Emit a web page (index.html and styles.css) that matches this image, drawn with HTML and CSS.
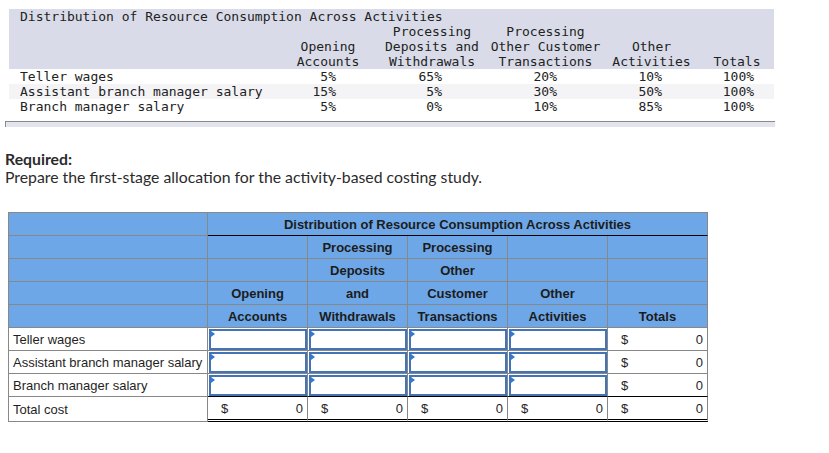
FILE: index.html
```html
<!DOCTYPE html>
<html lang="en">
<head>
<meta charset="utf-8">
<title>Activity-based costing</title>
<link rel="stylesheet" href="styles.css">
</head>
<body>
<div class="page">
  <div class="exhibit">
    <table class="dist">
      <colgroup>
        <col class="w-label"><col class="w-c1"><col class="w-c2"><col class="w-c3"><col class="w-c4"><col class="w-c5">
      </colgroup>
      <thead>
        <tr>
          <th class="dist-title" colspan="6">Distribution of Resource Consumption Across Activities</th>
        </tr>
        <tr>
          <th></th>
          <th>Opening<br>Accounts</th>
          <th>Processing<br>Deposits and<br>Withdrawals</th>
          <th>Processing<br>Other Customer<br>Transactions</th>
          <th>Other<br>Activities</th>
          <th>Totals</th>
        </tr>
      </thead>
      <tbody>
        <tr>
          <td class="dist-label">Teller wages</td>
          <td class="n1">5%</td><td class="n2">65%</td><td class="n3">20%</td><td class="n4">10%</td><td class="n5">100%</td>
        </tr>
        <tr class="alt">
          <td class="dist-label">Assistant branch manager salary</td>
          <td class="n1">15%</td><td class="n2">5%</td><td class="n3">30%</td><td class="n4">50%</td><td class="n5">100%</td>
        </tr>
        <tr>
          <td class="dist-label">Branch manager salary</td>
          <td class="n1">5%</td><td class="n2">0%</td><td class="n3">10%</td><td class="n4">85%</td><td class="n5">100%</td>
        </tr>
      </tbody>
    </table>
    <div class="scrollbar"></div>
  </div>

  <div class="required">
    <p class="required-head">Required:</p>
    <p class="required-text">Prepare the first-stage allocation for the activity-based costing study.</p>
  </div>

  <table class="answer">
    <colgroup>
      <col class="a-label"><col class="a-col"><col class="a-col"><col class="a-col"><col class="a-col"><col class="a-col">
    </colgroup>
    <thead>
      <tr>
        <th class="hl"></th>
        <th class="answer-title" colspan="5">Distribution of Resource Consumption Across Activities</th>
      </tr>
      <tr>
        <th class="hl"></th><th></th><th>Processing</th><th>Processing</th><th></th><th></th>
      </tr>
      <tr>
        <th class="hl"></th><th></th><th>Deposits</th><th>Other</th><th></th><th></th>
      </tr>
      <tr>
        <th class="hl"></th><th>Opening</th><th>and</th><th>Customer</th><th>Other</th><th></th>
      </tr>
      <tr>
        <th class="hl"></th><th>Accounts</th><th>Withdrawals</th><th>Transactions</th><th>Activities</th><th>Totals</th>
      </tr>
    </thead>
    <tbody>
      <tr>
        <td class="row-label">Teller wages</td>
        <td class="in-cell"><div class="entry"></div></td>
        <td class="in-cell"><div class="entry"></div></td>
        <td class="in-cell"><div class="entry"></div></td>
        <td class="in-cell"><div class="entry"></div></td>
        <td class="money"><div class="amt"><span>$</span><span>0</span></div></td>
      </tr>
      <tr>
        <td class="row-label">Assistant branch manager salary</td>
        <td class="in-cell"><div class="entry"></div></td>
        <td class="in-cell"><div class="entry"></div></td>
        <td class="in-cell"><div class="entry"></div></td>
        <td class="in-cell"><div class="entry"></div></td>
        <td class="money"><div class="amt"><span>$</span><span>0</span></div></td>
      </tr>
      <tr class="before-total">
        <td class="row-label">Branch manager salary</td>
        <td class="in-cell"><div class="entry"></div></td>
        <td class="in-cell"><div class="entry"></div></td>
        <td class="in-cell"><div class="entry"></div></td>
        <td class="in-cell"><div class="entry"></div></td>
        <td class="money"><div class="amt"><span>$</span><span>0</span></div></td>
      </tr>
      <tr class="total-row">
        <td class="row-label">Total cost</td>
        <td class="money"><div class="amt"><span>$</span><span>0</span></div></td>
        <td class="money"><div class="amt"><span>$</span><span>0</span></div></td>
        <td class="money"><div class="amt"><span>$</span><span>0</span></div></td>
        <td class="money"><div class="amt"><span>$</span><span>0</span></div></td>
        <td class="money"><div class="amt"><span>$</span><span>0</span></div></td>
      </tr>
    </tbody>
  </table>
</div>
</body>
</html>
```
FILE: styles.css
```css
html, body {
  margin: 0;
  padding: 0;
  background: #ffffff;
}

.page {
  padding: 9px 0 0 5px;
}

/* ---------- top exhibit (monospace) ---------- */
.exhibit {
  width: 770px;
}

.dist {
  border-collapse: collapse;
  table-layout: fixed;
  width: 765px;
  margin-left: 4px;
  font-family: "DejaVu Sans Mono", "Liberation Mono", monospace;
  font-size: 13px;
  line-height: 15px;
  color: #222222;
}

.w-label { width: 271px; }
.w-c1 { width: 96px; }
.w-c2 { width: 112px; }
.w-c3 { width: 115px; }
.w-c4 { width: 97px; }
.w-c5 { width: 74px; }

.dist thead {
  background: #d9dce8;
}

.dist th {
  font-weight: normal;
  padding: 0;
  text-align: center;
  vertical-align: bottom;
  white-space: nowrap;
}

.dist th.dist-title {
  text-align: left;
  padding-left: 11px;
}

.dist td {
  padding: 0;
  height: 15px;
  text-align: right;
  white-space: nowrap;
}

.dist tr.alt td {
  background: #f4f4f7;
}

.dist td.dist-label {
  text-align: left;
  padding-left: 11px;
}

.dist td.n1 { padding-right: 40px; }
.dist td.n2 { padding-right: 46px; }
.dist td.n3 { padding-right: 46px; }
.dist td.n4 { padding-right: 38px; }
.dist td.n5 { padding-right: 20px; }

.scrollbar {
  margin-top: 7px;
  height: 5px;
  border-top: 1px solid #8a8a8a;
  border-left: 1px solid #8a8a8a;
  background: #e3e5ee;
}

/* ---------- required ---------- */
.required {
  margin-top: 23px;
  font-family: "Lato", "Open Sans", sans-serif;
  font-size: 15.8px;
  line-height: 18px;
  color: #2b2b2b;
}

.required p {
  margin: 0;
}

.required-head {
  font-weight: bold;
}

/* ---------- answer table ---------- */
.answer {
  margin-top: 26px;
  margin-left: 3px;
  border-collapse: separate;
  border-spacing: 0;
  table-layout: fixed;
  width: 700px;
  border-top: 1px solid #888888;
  border-left: 1px solid #888888;
  font-family: "Liberation Sans", Arial, sans-serif;
  font-size: 13px;
  color: #1f1f1f;
}

.a-label { width: 199px; }
.a-col { width: 100px; }

.answer th,
.answer td {
  padding: 0;
  height: 22px;
  border-right: 1px solid #888888;
  border-bottom: 1px solid #888888;
  white-space: nowrap;
}

.answer th {
  background: #6ea7e7;
  font-weight: bold;
  text-align: center;
  vertical-align: middle;
  color: #1c1c1c;
}

.answer th.answer-title {
  border-bottom: 1px solid #000000;
}

.answer td.row-label {
  text-align: left;
  padding-left: 4px;
  background: #ffffff;
}

.answer td.in-cell {
  position: relative;
  padding: 1px 0 0 1px;
  height: 21px;
}

.entry {
  position: relative;
  height: 21px;
  box-sizing: border-box;
  border: 2px solid #4474b6;
  background: #ffffff;
}

.entry::before {
  content: "";
  position: absolute;
  left: 0;
  top: 0;
  border-top: 3px solid transparent;
  border-bottom: 3px solid transparent;
  border-left: 4px solid #2f7ad6;
}

.amt {
  display: flex;
  justify-content: space-between;
  padding: 0 4px 0 13px;
}

.answer tr.before-total td.in-cell,
.answer tr.before-total td.money {
  border-bottom-color: #000000;
}

.answer tr.total-row td.money {
  border-bottom: 3px double #000000;
}
```
